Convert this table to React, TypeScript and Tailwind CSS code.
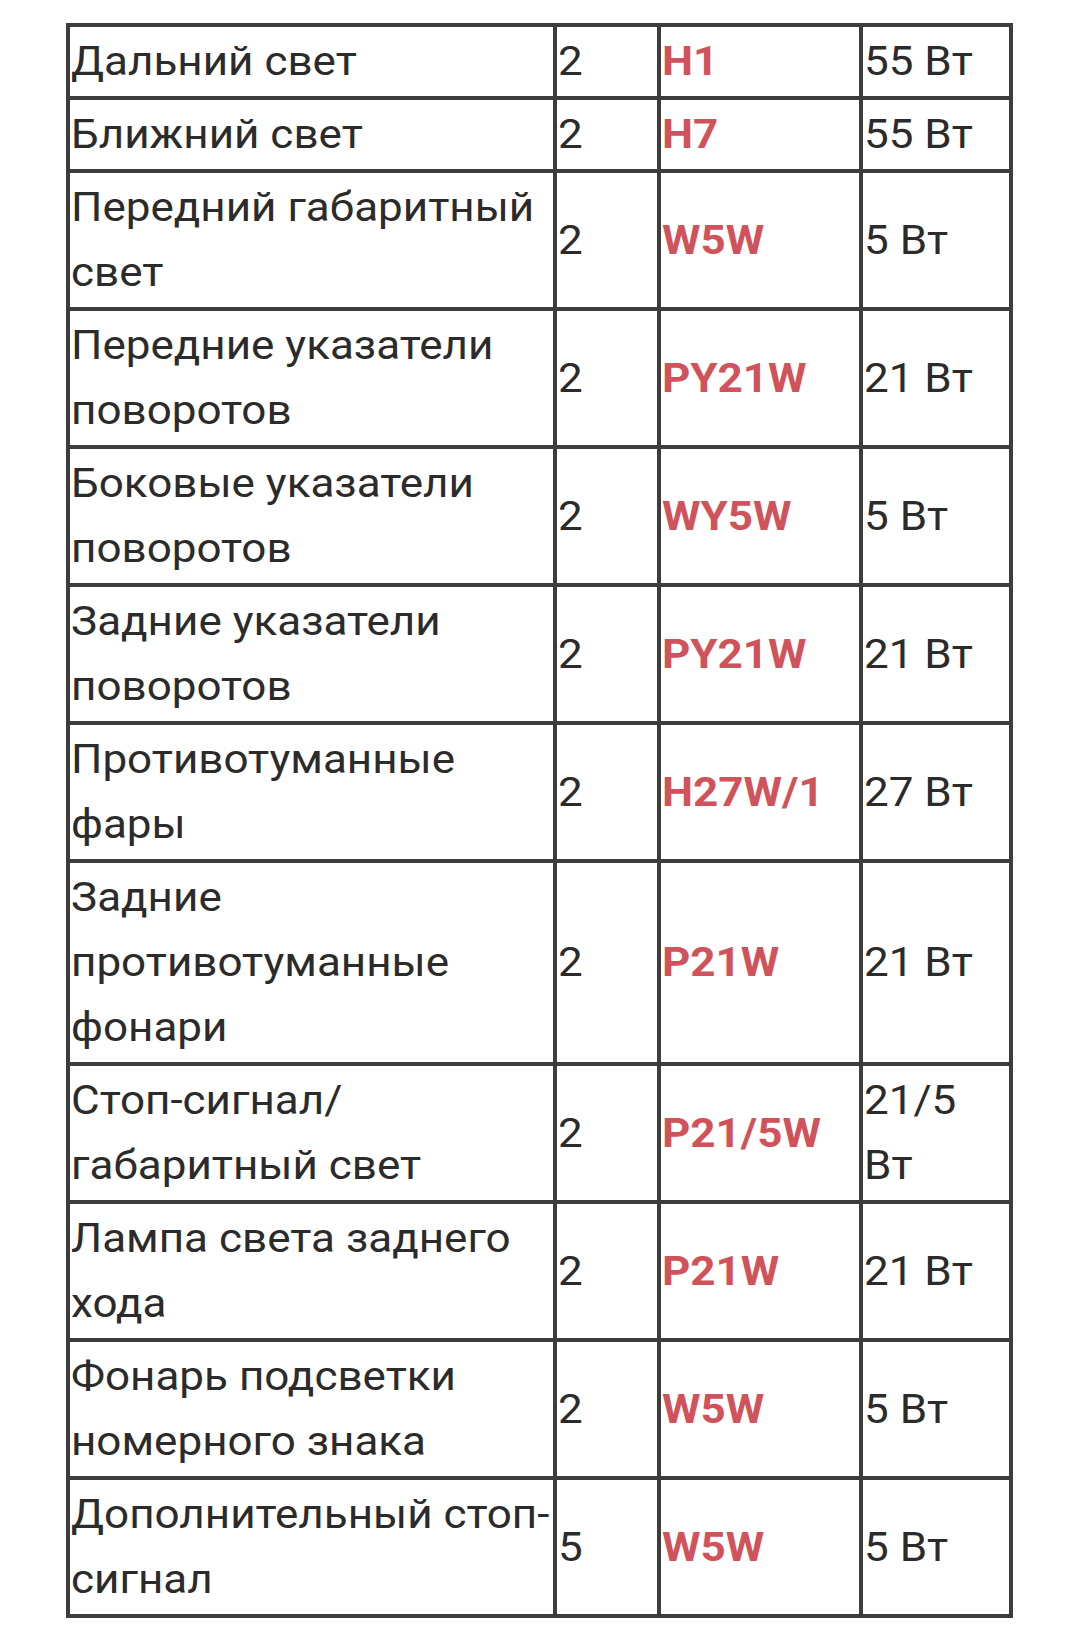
import React from 'react';

type Row = {
  name: string[];
  count: string;
  lamp: string;
  power: string[];
};

const rows: Row[] = [
  { name: ['Дальний свет'], count: '2', lamp: 'H1', power: ['55 Вт'] },
  { name: ['Ближний свет'], count: '2', lamp: 'H7', power: ['55 Вт'] },
  { name: ['Передний габаритный', 'свет'], count: '2', lamp: 'W5W', power: ['5 Вт'] },
  { name: ['Передние указатели', 'поворотов'], count: '2', lamp: 'PY21W', power: ['21 Вт'] },
  { name: ['Боковые указатели', 'поворотов'], count: '2', lamp: 'WY5W', power: ['5 Вт'] },
  { name: ['Задние указатели', 'поворотов'], count: '2', lamp: 'PY21W', power: ['21 Вт'] },
  { name: ['Противотуманные', 'фары'], count: '2', lamp: 'H27W/1', power: ['27 Вт'] },
  { name: ['Задние', 'противотуманные', 'фонари'], count: '2', lamp: 'P21W', power: ['21 Вт'] },
  { name: ['Стоп-сигнал/', 'габаритный свет'], count: '2', lamp: 'P21/5W', power: ['21/5', 'Вт'] },
  { name: ['Лампа света заднего', 'хода'], count: '2', lamp: 'P21W', power: ['21 Вт'] },
  { name: ['Фонарь подсветки', 'номерного знака'], count: '2', lamp: 'W5W', power: ['5 Вт'] },
  { name: ['Дополнительный стоп-', 'сигнал'], count: '5', lamp: 'W5W', power: ['5 Вт'] },
];

// the screenshot text is Roboto stretched ~10% wide
function Lines({ lines }: { lines: string[] }) {
  return (
    <>
      {lines.map((l, i) => (
        <span key={i} className="block origin-left scale-x-[1.1] whitespace-nowrap">
          {l}
        </span>
      ))}
    </>
  );
}

export default function App() {
  return (
    <div
      className="min-h-screen bg-white pl-[66px] pt-[23px] text-[#2b2b2b]"
      style={{ fontFamily: 'Roboto, "Noto Sans", sans-serif' }}
    >
      <table className="w-[947px] table-fixed border-collapse border-[4px] border-[#3d3d3d] text-[40px] leading-[65px]">
        <colgroup>
          <col className="w-[487px]" />
          <col className="w-[104px]" />
          <col className="w-[202px]" />
          <col className="w-[150px]" />
        </colgroup>
        <tbody>
          {rows.map((r, i) => (
            <tr key={i}>
              <td className="border-[4px] border-[#3d3d3d] px-[1px] py-[2px] align-middle">
                <Lines lines={r.name} />
              </td>
              <td className="border-[4px] border-[#3d3d3d] px-[1px] py-[2px] align-middle">
                <Lines lines={[r.count]} />
              </td>
              <td className="border-[4px] border-[#3d3d3d] px-[1px] py-[2px] align-middle font-bold text-[#d0535b]">
                <Lines lines={[r.lamp]} />
              </td>
              <td className="border-[4px] border-[#3d3d3d] px-[1px] py-[2px] align-middle">
                <Lines lines={r.power} />
              </td>
            </tr>
          ))}
        </tbody>
      </table>
    </div>
  );
}
